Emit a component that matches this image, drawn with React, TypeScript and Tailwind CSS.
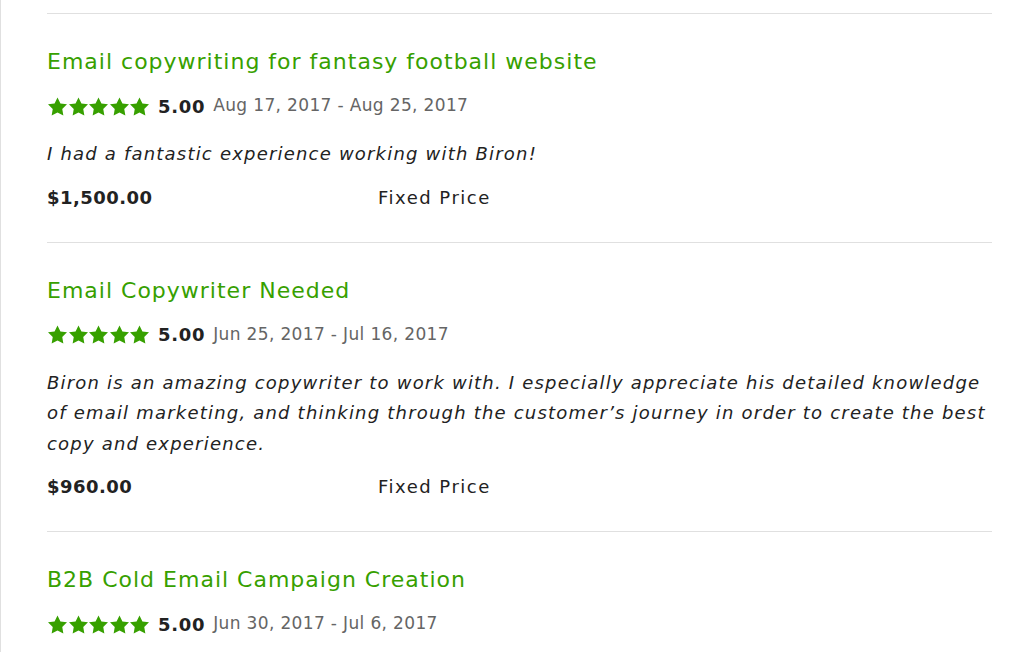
const jobs = [
  {
    title: "Email copywriting for fantasy football website",
    dates: "Aug 17, 2017 - Aug 25, 2017",
    comment: "I had a fantastic experience working with Biron!",
    price: "$1,500.00",
  },
  {
    title: "Email Copywriter Needed",
    dates: "Jun 25, 2017 - Jul 16, 2017",
    comment:
      "Biron is an amazing copywriter to work with. I especially appreciate his detailed knowledge of email marketing, and thinking through the customer\u2019s journey in order to create the best copy and experience.",
    price: "$960.00",
  },
  {
    title: "B2B Cold Email Campaign Creation",
    dates: "Jun 30, 2017 - Jul 6, 2017",
    comment: "",
    price: "",
  },
]

function Star() {
  return (
    <svg width="19" height="19" viewBox="0 0 24 23" className="fill-[#37a000]">
      <path d="M12 0l3.7 7.6 8.3 1.2-6 5.9 1.4 8.3L12 19.1 4.6 23 6 14.7 0 8.8l8.3-1.2z" />
    </svg>
  )
}

export default function App() {
  return (
    <main className="min-h-screen bg-white border-l border-[#e0e0e0] pl-[46px] pr-[38px] pt-[13px] font-['DejaVu_Sans',sans-serif] overflow-hidden h-[652px]">
      {jobs.map((job) => (
        <section key={job.title} className="border-t border-[#e0e0e0] pt-[34px] pb-[29px]">
          <h3 className="text-[22px] leading-[28px] tracking-[1px] text-[#37a000]">
            {job.title}
          </h3>

          <div className="flex items-center mt-[18px] h-[24px] pl-[1px]">
            <div className="flex gap-[1.5px]">
              <Star />
              <Star />
              <Star />
              <Star />
              <Star />
            </div>
            <span className="ml-[9px] text-[18px] font-bold tracking-[0.7px] text-[#222]">5.00</span>
            <span className="ml-[8px] text-[17px] tracking-[0.35px] text-[#656565]">{job.dates}</span>
          </div>

          {job.comment && (
            <p className="mt-[21px] text-[18px] leading-[30.5px] italic tracking-[1.2px] text-[#222]">
              {job.comment}
            </p>
          )}

          {job.price && (
            <div className="flex mt-[13px] text-[18px] leading-[30px] text-[#222]">
              <span className="w-[331px] font-bold tracking-[0.45px]">{job.price}</span>
              <span className="tracking-[1.5px]">Fixed Price</span>
            </div>
          )}
        </section>
      ))}
    </main>
  )
}
